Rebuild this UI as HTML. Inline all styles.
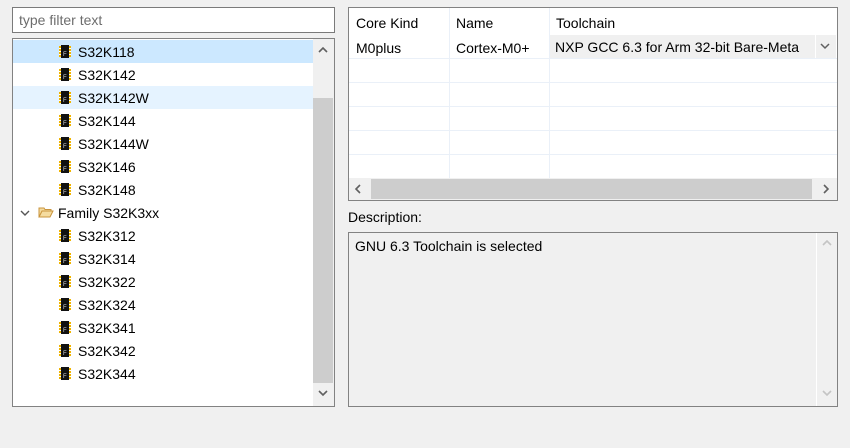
<!DOCTYPE html>
<html><head><style>
*{margin:0;padding:0;box-sizing:border-box}
body{width:850px;height:448px;background:#f0f0f0;font-family:"Liberation Sans",sans-serif;font-size:14px;color:#000;position:relative;overflow:hidden}
.a{position:absolute}
.row{position:absolute;left:1px;width:300px;height:23px}
.lbl{position:absolute;left:65px;top:4px;white-space:nowrap}
.chip{position:absolute;left:46px;top:5px;width:12px;height:13px}
.cell{position:absolute;white-space:nowrap}
</style></head><body>
<div class="a" style="left:12px;top:7px;width:323px;height:26px;background:#fff;border:1px solid #7a7a7a"></div>
<div class="a" style="left:19px;top:12px;color:#6d6d6d">type filter text</div>

<div class="a" style="left:12px;top:38px;width:323px;height:369px;background:#fff;border:1px solid #828282"></div>
<div class="a" style="left:313px;top:39px;width:21px;height:367px;background:#f0f0f0"></div>
<div class="a" style="left:313px;top:98px;width:20px;height:285px;background:#cdcdcd"></div>
<svg class="a" style="left:316px;top:45px" width="14" height="10"><path d="M3 7L7 3L11 7" stroke="#606060" stroke-width="1.6" fill="none"/></svg>
<svg class="a" style="left:316px;top:388px" width="14" height="10"><path d="M3 3L7 7L11 3" stroke="#606060" stroke-width="1.6" fill="none"/></svg>

<div id="tree" class="a" style="left:12px;top:0;width:301px;height:448px"></div>

<div class="a" style="left:348px;top:7px;width:490px;height:194px;background:#fff;border:1px solid #828282"></div>
<div class="a" style="left:449px;top:8px;width:1px;height:170px;background:#eaf0f8"></div>
<div class="a" style="left:549px;top:8px;width:1px;height:170px;background:#eaf0f8"></div>
<div class="a" style="left:550px;top:35px;width:286px;height:23px;background:#f0f0f0"></div>
<div class="a" style="left:815px;top:35px;width:1px;height:23px;background:#fff"></div>
<svg class="a" style="left:819px;top:41px" width="12" height="10"><path d="M2 3L6 7L10 3" stroke="#606060" stroke-width="1.5" fill="none"/></svg>
<div class="a" style="left:349px;top:58px;width:488px;height:1px;background:#eaf0f8"></div>
<div class="a" style="left:349px;top:82px;width:488px;height:1px;background:#eaf0f8"></div>
<div class="a" style="left:349px;top:106px;width:488px;height:1px;background:#eaf0f8"></div>
<div class="a" style="left:349px;top:130px;width:488px;height:1px;background:#eaf0f8"></div>
<div class="a" style="left:349px;top:154px;width:488px;height:1px;background:#eaf0f8"></div>
<div class="cell" style="left:356px;top:15px">Core Kind</div>
<div class="cell" style="left:456px;top:15px">Name</div>
<div class="cell" style="left:556px;top:15px">Toolchain</div>
<div class="cell" style="left:356px;top:40px">M0plus</div>
<div class="cell" style="left:456px;top:40px">Cortex-M0+</div>
<div class="cell" style="left:555px;top:39px">NXP GCC 6.3 for Arm 32-bit Bare-Meta</div>
<div class="a" style="left:349px;top:178px;width:488px;height:22px;background:#f0f0f0"></div>
<div class="a" style="left:371px;top:179px;width:441px;height:20px;background:#cdcdcd"></div>
<svg class="a" style="left:353px;top:183px" width="10" height="12"><path d="M7 2L3 6L7 10" stroke="#606060" stroke-width="1.6" fill="none"/></svg>
<svg class="a" style="left:821px;top:183px" width="10" height="12"><path d="M3 2L7 6L3 10" stroke="#606060" stroke-width="1.6" fill="none"/></svg>

<div class="a" style="left:348px;top:209px">Description:</div>
<div class="a" style="left:348px;top:232px;width:490px;height:175px;background:#f0f0f0;border:1px solid #828282"></div>
<div class="a" style="left:816px;top:233px;width:1px;height:173px;background:#fff"></div>
<svg class="a" style="left:820px;top:238px" width="14" height="10"><path d="M3 7L7 3L11 7" stroke="#c4c4c4" stroke-width="1.6" fill="none"/></svg>
<svg class="a" style="left:820px;top:388px" width="14" height="10"><path d="M3 3L7 7L11 3" stroke="#c4c4c4" stroke-width="1.6" fill="none"/></svg>
<div class="a" style="left:355px;top:238px">GNU 6.3 Toolchain is selected</div>

<script>
var items=[["S32K118",1],["S32K142",1],["S32K142W",1],["S32K144",1],["S32K144W",1],["S32K146",1],["S32K148",1],["Family S32K3xx",0],["S32K312",1],["S32K314",1],["S32K322",1],["S32K324",1],["S32K341",1],["S32K342",1],["S32K344",1]];
var chip='<svg width="12" height="13" viewBox="0 0 12 13"><rect x="0" y="1" width="12" height="11" fill="#f0b400"/><rect x="2" y="0" width="8" height="13" fill="#111"/><rect x="0" y="3" width="2" height="1" fill="#fff"/><rect x="0" y="6" width="2" height="1" fill="#fff"/><rect x="0" y="9" width="2" height="1" fill="#fff"/><rect x="10" y="3" width="2" height="1" fill="#fff"/><rect x="10" y="6" width="2" height="1" fill="#fff"/><rect x="10" y="9" width="2" height="1" fill="#fff"/><text x="4" y="11" font-size="6" fill="#ddd" font-family="Liberation Sans">F</text></svg>';
var h='';
items.forEach(function(it,i){
 var top=40+i*23, bg=i==0?'#cce8ff':(i==2?'#e5f3ff':'transparent');
 h+='<div class="row" style="top:'+top+'px;background:'+bg+'">';
 if(it[1]) h+='<div class="chip">'+chip+'</div><div class="lbl">'+it[0]+'</div>';
 else h+='<svg class="a" style="left:7px;top:8px" width="10" height="8"><path d="M1 2L5 6L9 2" stroke="#555" stroke-width="1.4" fill="none"/></svg><svg class="a" style="left:25px;top:5px" width="16" height="12"><path d="M1 2H6L7 3.5H13V5H4L1 11Z M1 11L4 5H15L12 11Z" fill="#f5dca0" stroke="#c9943c" stroke-width="1"/></svg><div class="lbl" style="left:45px">'+it[0]+'</div>';
 h+='</div>';
});
document.getElementById('tree').innerHTML=h;
</script>
</body></html>
